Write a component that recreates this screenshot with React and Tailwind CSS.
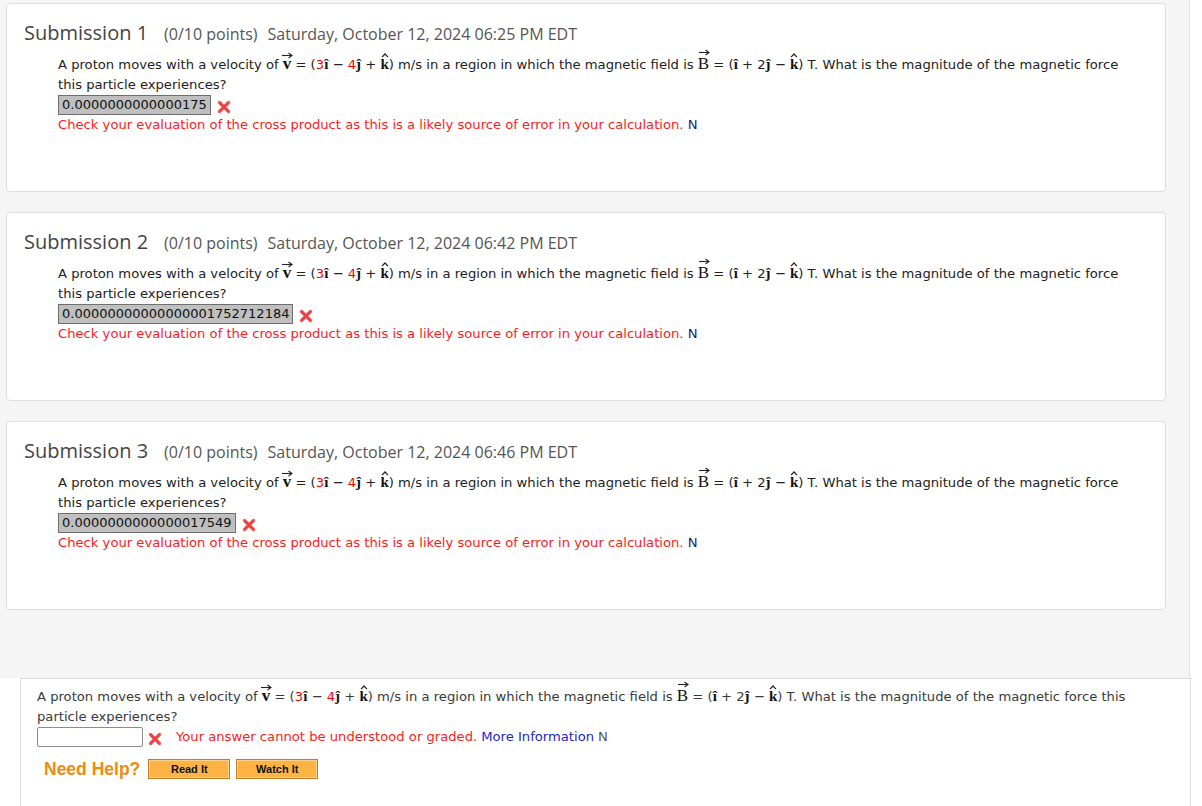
import React from "react";

const BODY = "font-['DejaVu_Sans',sans-serif]";

function Arrow({ top }) {
  return (
    <svg
      className={`absolute left-1/2 -translate-x-1/2 ${top}`}
      width="12"
      height="7"
      viewBox="0 0 12 7"
    >
      <path d="M1 3.5 H10.5" stroke="#222" strokeWidth="1.1" fill="none" />
      <path d="M7.5 1 L11 3.5 L7.5 6" stroke="#222" strokeWidth="1.1" fill="none" />
    </svg>
  );
}

function VecV() {
  return (
    <span className="relative inline-block leading-none font-['Liberation_Serif',serif] text-[17px] font-bold text-[#111]">
      v
      <Arrow top="top-[-3px]" />
    </span>
  );
}
function VecB() {
  return (
    <span className="relative inline-block leading-none font-['Liberation_Serif',serif] text-[17px] text-[#111]">
      B
      <Arrow top="top-[-6px]" />
    </span>
  );
}

function Ih() {
  return <span className="font-['Liberation_Serif',serif] font-bold text-[15px] text-[#111]">î</span>;
}
function Jh() {
  return <span className="font-['Liberation_Serif',serif] font-bold text-[15px] text-[#111]">ĵ</span>;
}
function Kh() {
  return (
    <span className="relative inline-block leading-none font-['Liberation_Serif',serif] font-bold text-[15px] text-[#111]">
      k
      <svg
        className="absolute left-1/2 -translate-x-1/2 top-[-4px]"
        width="8"
        height="5"
        viewBox="0 0 8 5"
      >
        <path d="M1 4.2 L4 1 L7 4.2" stroke="#222" strokeWidth="1.2" fill="none" />
      </svg>
    </span>
  );
}

function Question() {
  return (
    <>
      A proton moves with a velocity of <VecV /> = (
      <span className="text-[#ff0000]">3</span>
      <Ih /> − <span className="text-[#ff0000]">4</span>
      <Jh /> + <Kh />) m/s in a region in which the magnetic field is <VecB /> = (
      <Ih /> + 2<Jh /> − <Kh />) T. What is the magnitude of the magnetic force this particle
      experiences?
    </>
  );
}

function RedX() {
  return (
    <svg width="14" height="14" viewBox="0 0 14 14" className="shrink-0">
      <path d="M2.5 2.5 L11.5 11.5 M11.5 2.5 L2.5 11.5" stroke="#f05a5a" strokeWidth="3.4" strokeLinecap="round" />
      <path d="M3 3 L11 11 M11 3 L3 11" stroke="#e83a3a" strokeWidth="1.6" strokeLinecap="round" />
    </svg>
  );
}

function Card({ n, time, answer }) {
  return (
    <div className="h-[189px] w-[1160px] rounded-[4px] border border-[#dedede] bg-white pl-[17px] pr-[34px] pt-[17px]">
      <div className="flex items-baseline h-[24px] leading-[24px] font-['Open_Sans',sans-serif]">
        <span className="text-[20px] text-[#444]">Submission {n}</span>
        <span className="ml-[16px] text-[16px] text-[#555]">(0/10 points)</span>
        <span className="ml-[10px] text-[16px] text-[#555]">Saturday, October 12, 2024 {time} PM EDT</span>
      </div>
      <div className={`ml-[34px] mt-[9px] text-[13.15px] leading-[20px] text-[#222] ${BODY}`}>
        <div>
          <Question />
        </div>
        <div className="flex items-center h-[20px]">
          <span className="h-[20px] border border-[#6e6e6e] bg-[#bfbfbf] px-[3px] leading-[18px] text-[#111] font-['DejaVu_Sans',sans-serif] text-[13px]">
            {answer}
          </span>
          <span className="ml-[6px] mt-[3px]">
            <RedX />
          </span>
        </div>
        <div className="text-[#ff1a1a]">
          Check your evaluation of the cross product as this is a likely source of error in your
          calculation. <span className="text-[#1c1c7a]">N</span>
        </div>
      </div>
    </div>
  );
}

export default function App() {
  return (
    <div className="w-[1202px] h-[806px] overflow-hidden bg-white">
      <div className="w-[1190px] h-[678px] bg-[#f5f5f5] border-r border-[#e4e4e4] pt-[3px] pl-[6px] flex flex-col gap-[20px]">
        <Card n={1} time="06:25" answer="0.0000000000000175" />
        <Card n={2} time="06:42" answer="0.00000000000000001752712184" />
        <Card n={3} time="06:46" answer="0.0000000000000017549" />
      </div>
      <div className="ml-[20px] w-[1171px] h-[128px] border-l border-t border-r border-[#dcdcdc] bg-white pl-[16px] pr-[45px] pt-[7px]">
        <div className={`text-[13.15px] leading-[20px] text-[#3a3a3a] ${BODY}`}>
          <div>
            <Question />
          </div>
          <div className="flex items-center h-[20px]">
            <span className="h-[20px] w-[106px] rounded-[2px] border border-[#8c8c8c] bg-white" />
            <span className="ml-[5px] mt-[4px]">
              <RedX />
            </span>
            <span className="ml-[14px] text-[#ff1a1a]">Your answer cannot be understood or graded.</span>
            <span className="ml-[4px] text-[#2323d6]">More Information</span>
            <span className="ml-[4px] text-[#555]">N</span>
          </div>
        </div>
        <div className="mt-[12px] ml-[7px] flex items-center h-[20px] gap-[6px]">
          <span className="mr-[2px] font-['Liberation_Sans',Arial,sans-serif] font-bold text-[17.5px] text-[#f28a0c] leading-[20px]">
            Need Help?
          </span>
          <button className="h-[20px] w-[82px] border border-[#c97a28] bg-[#fdb444] shadow-[inset_0_0_0_1px_#fcd08a] font-['Liberation_Sans',Arial,sans-serif] font-bold text-[11px] text-[#111] leading-[18px]">
            Read It
          </button>
          <button className="h-[20px] w-[82px] border border-[#c97a28] bg-[#fdb444] shadow-[inset_0_0_0_1px_#fcd08a] font-['Liberation_Sans',Arial,sans-serif] font-bold text-[11px] text-[#111] leading-[18px]">
            Watch It
          </button>
        </div>
      </div>
    </div>
  );
}
